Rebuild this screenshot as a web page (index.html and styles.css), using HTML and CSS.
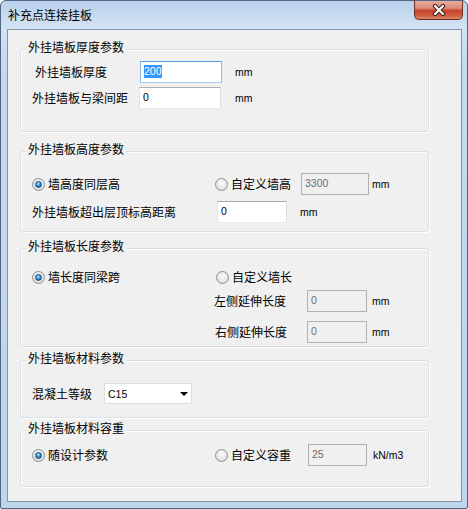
FILE: index.html
```html
<!DOCTYPE html>
<html lang="zh-CN">
<head>
<meta charset="utf-8">
<title>补充点连接挂板</title>
<link rel="stylesheet" href="styles.css">
</head>
<body>
<div class="window">
  <div class="titlebar">
    <span class="title">补充点连接挂板</span>
    <div class="close">
      <svg width="14" height="12" viewBox="0 0 14 12">
        <path d="M3 2 L11 10 M11 2 L3 10" stroke="#3a1f1a" stroke-width="4.2" stroke-linecap="round"/>
        <path d="M3 2 L11 10 M11 2 L3 10" stroke="#ffffff" stroke-width="2.2" stroke-linecap="round"/>
      </svg>
    </div>
  </div>
  <div class="client">
    <section class="group g1">
      <div class="legend">外挂墙板厚度参数</div>
      <div class="row g1a">
        <span class="lbl w105">外挂墙板厚度</span>
        <span class="field focus w82"><span class="sel">200</span></span>
        <span class="unit ml13">mm</span>
      </div>
      <div class="row g1b">
        <span class="lbl w107">外挂墙板与梁间距</span>
        <span class="field w82">0</span>
        <span class="unit ml14">mm</span>
      </div>
    </section>

    <section class="group g2">
      <div class="legend">外挂墙板高度参数</div>
      <div class="row g2a">
        <span class="opt w183"><span class="radio on"></span><span>墙高度同层高</span></span>
        <span class="opt"><span class="radio"></span><span class="lbl w70">自定义墙高</span></span>
        <span class="field disabled w68">3300</span>
        <span class="unit ml3">mm</span>
      </div>
      <div class="row g2b">
        <span class="lbl w185">外挂墙板超出层顶标高距离</span>
        <span class="field w70">0</span>
        <span class="unit ml13">mm</span>
      </div>
    </section>

    <section class="group g3">
      <div class="legend">外挂墙板长度参数</div>
      <div class="row g3a">
        <span class="opt w184"><span class="radio on"></span><span>墙长度同梁跨</span></span>
        <span class="opt"><span class="radio"></span><span>自定义墙长</span></span>
      </div>
      <div class="row g3b">
        <span class="lbl w93">左侧延伸长度</span>
        <span class="field disabled w60">0</span>
        <span class="unit ml5">mm</span>
      </div>
      <div class="row g3c">
        <span class="lbl w92">右侧延伸长度</span>
        <span class="field disabled w60">0</span>
        <span class="unit ml5">mm</span>
      </div>
    </section>

    <section class="group g4">
      <div class="legend">外挂墙板材料参数</div>
      <div class="row g4a">
        <span class="lbl w72">混凝土等级</span>
        <span class="combo"><span class="combo-text">C15</span><span class="arrow"></span></span>
      </div>
    </section>

    <section class="group g5">
      <div class="legend">外挂墙板材料容重</div>
      <div class="row g5a">
        <span class="opt w183"><span class="radio on"></span><span>随设计参数</span></span>
        <span class="opt"><span class="radio"></span><span class="lbl w77">自定义容重</span></span>
        <span class="field disabled w59">25</span>
        <span class="unit ml6">kN/m3</span>
      </div>
    </section>
  </div>
</div>
</body>
</html>
```

FILE: styles.css
```css
body {
  margin: 0;
  font-family: "Noto Sans CJK SC", "Liberation Sans", sans-serif;
  font-size: 12px;
  color: #000;
}

.window {
  width: 468px;
  height: 509px;
  box-sizing: border-box;
  border: 1px solid #4f6580;
  border-radius: 6px 6px 2px 2px;
  background: linear-gradient(180deg, #b9d1eb 0, #d3e3f4 28px, #c5d9f0 60px, #bfd5ee 100%);
  overflow: hidden;
}

.titlebar {
  height: 28px;
  display: flex;
}

.title {
  padding-left: 7px;
  line-height: 28px;
}

.close {
  margin-left: auto;
  margin-right: 4px;
  width: 49px;
  height: 19px;
  box-sizing: border-box;
  border: 1px solid #6e2b21;
  border-top: none;
  border-radius: 0 0 5px 5px;
  background: linear-gradient(180deg, #e9ab9c 0, #dc8a78 40%, #c6452d 52%, #cf5d3e 80%, #dc8a6c 100%);
  display: flex;
  align-items: center;
  justify-content: center;
}

.client {
  margin-left: 6px;
  width: 455px;
  height: 473px;
  box-sizing: border-box;
  border: 1px solid #8394aa;
  background: #f0f0f0;
}

.group {
  margin-left: 12px;
  width: 409px;
  box-sizing: border-box;
  border: 1px solid #d5dfe5;
  border-radius: 3px;
  box-shadow: inset 1px 1px 0 #fff, 1px 1px 0 #fff;
}

.g1 { margin-top: 19px; height: 83px; }
.g2 { margin-top: 19px; height: 81px; }
.g3 { margin-top: 16px; height: 99px; }
.g4 { margin-top: 13px; height: 58px; }
.g5 { margin-top: 12px; height: 57px; }

.legend {
  width: max-content;
  margin: -10px 0 0 5px;
  padding: 0 2px;
  background: #f0f0f0;
  line-height: 14px;
}

.row {
  display: flex;
  align-items: center;
  height: 22px;
  line-height: 14px;
}

.g1a { margin-top: 7px; padding-left: 14px; }
.g1b { margin-top: 4px; padding-left: 11px; }
.g2a { margin-top: 17px; padding-left: 11px; }
.g2b { margin-top: 6px; padding-left: 11px; }
.g3a { margin-top: 16px; padding-left: 11px; height: 16px; }
.g3b { margin-top: 5px; padding-left: 193px; }
.g3c { margin-top: 9px; padding-left: 194px; }
.g4a { margin-top: 18px; padding-left: 11px; height: 21px; }
.g5a { margin-top: 9px; padding-left: 11px; }

.lbl { flex: none; white-space: nowrap; }
.w70 { width: 70px; }
.w72 { width: 72px; }
.w77 { width: 77px; }
.w92 { width: 92px; }
.w93 { width: 93px; }
.w105 { width: 105px; }
.w107 { width: 107px; }
.w185 { width: 185px; }
.w183 { width: 183px; }
.w184 { width: 184px; }

.opt {
  display: flex;
  align-items: center;
  gap: 3px;
  flex: none;
  white-space: nowrap;
}

.radio {
  width: 13px;
  height: 13px;
  box-sizing: border-box;
  border-radius: 50%;
  border: 1px solid #8d8f91;
  background: radial-gradient(circle at 50% 40%, #fbfbfb 0, #ececec 45%, #cfcfcf 100%);
  display: flex;
  align-items: center;
  justify-content: center;
  flex: none;
}

.radio.on::after {
  content: "";
  width: 7px;
  height: 7px;
  box-sizing: border-box;
  border-radius: 50%;
  border: 1px solid #1b4f7e;
  background: radial-gradient(circle at 45% 35%, #bfeaff 0, #4ba6e6 35%, #155a9c 80%, #0d3f72 100%);
}

.field {
  flex: none;
  box-sizing: border-box;
  height: 22px;
  border: 1px solid;
  border-color: #abadb3 #dbdfe6 #e3e9ef #e2e3ea;
  background: #fff;
  font-family: "Liberation Sans", sans-serif;
  font-size: 10.5px;
  padding: 0 0 2px 3px;
  display: flex;
  align-items: center;
}

.field.focus {
  border-color: #569de5 #8ebce9 #a9cdef #8ebce9;
}

.field.disabled {
  background: #f0f0f0;
  border-color: #adb2b5;
  color: #6d6d6d;
}

.w59 { width: 59px; }
.w60 { width: 60px; }
.w68 { width: 68px; }
.w82 { width: 82px; }

.sel {
  background: #3399ff;
  color: #fff;
  line-height: 13px;
}

.unit {
  font-family: "Liberation Sans", sans-serif;
  font-size: 10.5px;
  flex: none;
}

.ml3 { margin-left: 3px; }
.ml5 { margin-left: 5px; }
.ml6 { margin-left: 6px; }
.ml13 { margin-left: 13px; }
.ml14 { margin-left: 14px; }

.combo {
  flex: none;
  width: 88px;
  height: 21px;
  box-sizing: border-box;
  border: 1px solid #dadde2;
  background: #fff;
  display: flex;
  align-items: center;
  justify-content: space-between;
  padding: 0 3px 0 3px;
}

.combo-text {
  font-family: "Liberation Sans", sans-serif;
  font-size: 10.5px;
}

.arrow {
  width: 0;
  height: 0;
  border-left: 4px solid transparent;
  border-right: 4px solid transparent;
  border-top: 4px solid #000;
}
```
